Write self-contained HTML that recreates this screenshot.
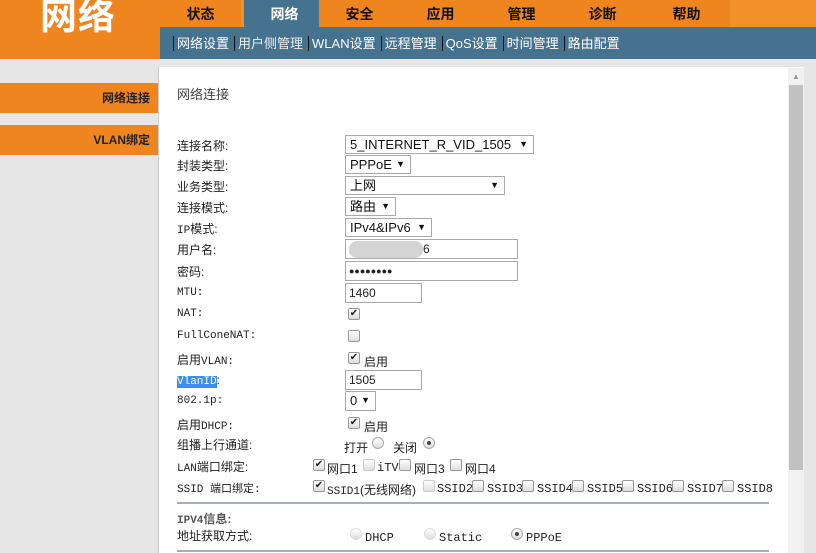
<!DOCTYPE html>
<html><head><meta charset="utf-8"><style>
*{margin:0;padding:0;box-sizing:border-box}
body{width:816px;height:553px;overflow:hidden;background:#e6e6e6;font-family:"Liberation Sans","Noto Sans CJK SC",sans-serif;position:relative;font-size:12px;color:#222}
.a{position:absolute}
.logo{left:0;top:0;width:160px;height:59px;background:#ef851f}
.logo span{position:absolute;left:40px;top:-14px;font-size:37px;font-weight:bold;color:#fff;letter-spacing:1px}
.tabs{left:160px;top:0;width:656px;height:27px;background:#f29128}
.tab{position:absolute;top:0;height:27px;width:81px;text-align:center;line-height:29px;font-size:14px;font-weight:bold;color:#111;background:#ef851f}
.tab.on{background:#44728f;color:#fff}
.sub{left:160px;top:27px;width:656px;height:32px;background:#44728f;color:#fff;font-size:13px;line-height:34px;padding-left:13px}
.sub b{font-weight:normal;border-left:1px solid #111;padding:0 5px 0 3px}
.side{left:0;height:30px;width:160px;background:#ef851f;text-align:right;padding-right:10px;line-height:30px;font-weight:bold;font-size:12px;color:#222}
.panel{left:158px;top:67px;width:646px;height:486px;background:#fff;border-left:1px solid #ccc}
.sb{left:788px;top:68px;width:16px;height:485px;background:#f1f1f1}
.lbl{left:177px;font-size:12px;color:#222}
.ms{font-family:"Liberation Mono",monospace;font-size:11px}
.sel{position:absolute;height:19px;border:1px solid #a9a9a9;background:#fff;font-size:13px;line-height:17px;padding-left:4px;color:#111}
.sel i{position:absolute;right:5px;top:0;font-style:normal;font-size:9px}
.inp{position:absolute;height:20px;border:1px solid #a9a9a9;background:#fff;font-size:12px;line-height:18px;padding-left:3px}
.cb{position:absolute;width:12px;height:12px;border:1px solid #999;border-radius:2px;background:linear-gradient(#fff,#ddd);font-size:10px;line-height:10px;text-align:center;color:#222}
.rd{position:absolute;width:12px;height:12px;border:1px solid #aaa;border-radius:50%;background:linear-gradient(#fff,#ddd)}
.rd.on::after{content:"";position:absolute;left:3px;top:3px;width:4px;height:4px;border-radius:50%;background:#444}
.t{position:absolute;font-size:12px}
.hr{left:177px;width:592px;height:2px;background:#a7aeb6}
</style></head><body>
<div class="a logo"><span>网络</span></div>
<div class="a tabs">
<div class="tab" style="left:0">状态</div><div class="tab on" style="left:84px">网络</div><div class="tab" style="left:159px">安全</div><div class="tab" style="left:240px">应用</div><div class="tab" style="left:321px">管理</div><div class="tab" style="left:402px">诊断</div><div class="tab" style="left:483px;width:87px">帮助</div>
</div>
<div class="a sub"><b>网络设置</b><b style="color:#eee">用户侧管理</b><b>WLAN设置</b><b>远程管理</b><b>QoS设置</b><b>时间管理</b><b>路由配置</b></div>
<div class="a side" style="top:83px">网络连接</div>
<div class="a side" style="top:125px">VLAN绑定</div>
<div class="a panel"></div>
<div class="a sb"><div class="a" style="left:4px;top:4px;font-size:8px;color:#999">▲</div><div class="a" style="left:1px;top:17px;width:14px;height:385px;background:#c1c1c1"></div></div>
<div class="a" style="left:177px;top:84px;font-size:13px;color:#444">网络连接</div>

<div class="a lbl" style="top:137px">连接名称:</div>
<div class="sel" style="left:345px;top:135px;width:189px">5_INTERNET_R_VID_1505<i>▼</i></div>
<div class="a lbl" style="top:157px">封装类型:</div>
<div class="sel" style="left:345px;top:155px;width:66px">PPPoE<i>▼</i></div>
<div class="a lbl" style="top:178px">业务类型:</div>
<div class="sel" style="left:345px;top:176px;width:160px">上网<i>▼</i></div>
<div class="a lbl" style="top:199px">连接模式:</div>
<div class="sel" style="left:345px;top:197px;width:51px">路由<i>▼</i></div>
<div class="a lbl" style="top:220px"><span class="ms">IP</span>模式:</div>
<div class="sel" style="left:345px;top:218px;width:87px">IPv4&amp;IPv6<i>▼</i></div>
<div class="a lbl" style="top:241px">用户名:</div>
<div class="inp" style="left:345px;top:239px;width:173px"><span style="display:inline-block;width:74px;height:17px;background:#d4d4d4;vertical-align:middle;border-radius:8px"></span>6</div>
<div class="a lbl" style="top:263px">密码:</div>
<div class="inp" style="left:345px;top:261px;width:173px;font-size:9px">●●●●●●●●</div>
<div class="a lbl ms" style="top:287px">MTU:</div>
<div class="inp" style="left:345px;top:283px;width:77px">1460</div>
<div class="a lbl ms" style="top:308px">NAT:</div>
<div class="cb" style="left:348px;top:308px">✔</div>
<div class="a lbl ms" style="top:330px">FullConeNAT:</div>
<div class="cb" style="left:348px;top:330px"></div>
<div class="a lbl" style="top:351px">启用<span class="ms">VLAN:</span></div>
<div class="cb" style="left:348px;top:352px">✔</div><div class="t" style="left:364px;top:353px">启用</div>
<div class="a lbl" style="top:373px"><span class="ms" style="background:#3d8ee6;color:#fff">VlanID</span>:</div>
<div class="inp" style="left:345px;top:370px;width:77px">1505</div>
<div class="a lbl ms" style="top:395px">802.1p:</div>
<div class="sel" style="left:345px;top:391px;width:31px;height:20px">0<i>▼</i></div>
<div class="a lbl" style="top:416px">启用<span class="ms">DHCP:</span></div>
<div class="cb" style="left:348px;top:417px">✔</div><div class="t" style="left:364px;top:418px">启用</div>
<div class="a lbl" style="top:436px">组播上行通道:</div>
<div class="t" style="left:344px;top:439px">打开</div><div class="rd" style="left:372px;top:437px"></div>
<div class="t" style="left:393px;top:439px">关闭</div><div class="rd on" style="left:423px;top:437px"></div>
<div class="a lbl" style="top:458px"><span class="ms">LAN</span>端口绑定:</div>
<div class="cb" style="left:313px;top:459px">✔</div><div class="t" style="left:327px;top:460px">网口1</div>
<div class="cb" style="left:363px;top:459px;border-color:#ccc"></div><div class="t ms" style="left:377px;top:461px">iTV</div>
<div class="cb" style="left:399px;top:459px"></div><div class="t" style="left:414px;top:460px">网口3</div>
<div class="cb" style="left:450px;top:459px"></div><div class="t" style="left:465px;top:460px">网口4</div>
<div class="a lbl ms" style="top:480px">SSID 端口绑定:</div>
<div class="cb" style="left:313px;top:480px">✔</div><div class="t" style="left:327px;top:481px"><span class="ms">SSID1</span>(无线网络)</div>
<div class="cb" style="left:423px;top:480px;border-color:#ccc"></div><div class="t ms" style="left:437px;top:482px">SSID2</div>
<div class="cb" style="left:472px;top:480px"></div><div class="t ms" style="left:487px;top:482px">SSID3</div>
<div class="cb" style="left:522px;top:480px"></div><div class="t ms" style="left:537px;top:482px">SSID4</div>
<div class="cb" style="left:572px;top:480px"></div><div class="t ms" style="left:587px;top:482px">SSID5</div>
<div class="cb" style="left:622px;top:480px"></div><div class="t ms" style="left:637px;top:482px">SSID6</div>
<div class="cb" style="left:672px;top:480px"></div><div class="t ms" style="left:687px;top:482px">SSID7</div>
<div class="cb" style="left:722px;top:480px"></div><div class="t ms" style="left:737px;top:482px">SSID8</div>
<div class="a hr" style="top:502px"></div>
<div class="a lbl" style="top:510px;font-weight:bold;color:#555"><span class="ms">IPV4</span>信息:</div>
<div class="a lbl" style="top:527px">地址获取方式:</div>
<div class="rd" style="left:350px;top:528px;border-color:#ddd"></div><div class="t ms" style="left:365px;top:531px">DHCP</div>
<div class="rd" style="left:424px;top:528px;border-color:#ddd"></div><div class="t ms" style="left:439px;top:531px">Static</div>
<div class="rd on" style="left:511px;top:528px"></div><div class="t ms" style="left:526px;top:531px">PPPoE</div>
<div class="a hr" style="top:550px"></div>
</body></html>
